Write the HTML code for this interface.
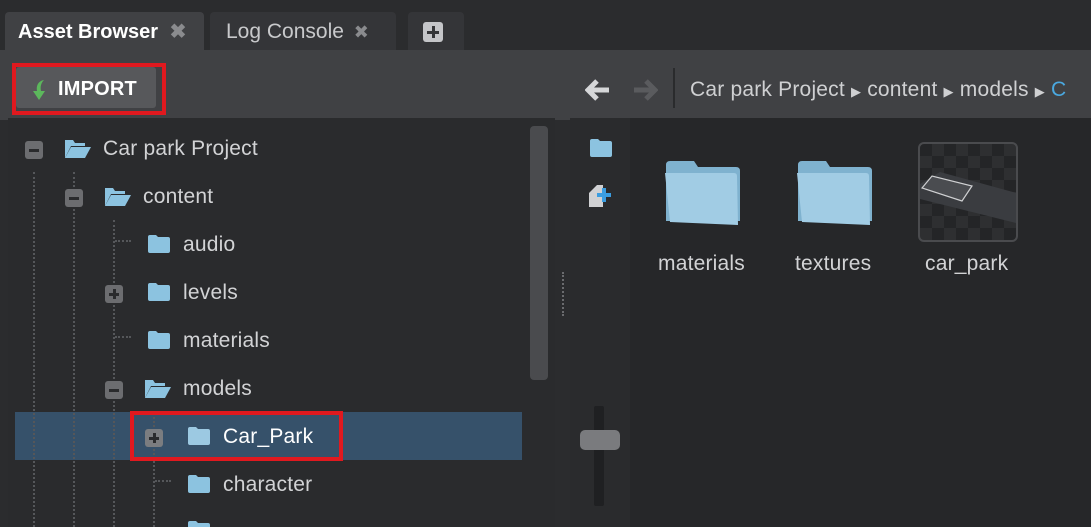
<!DOCTYPE html>
<html><head><meta charset="utf-8"><style>
*{margin:0;padding:0;box-sizing:border-box}
html,body{width:1091px;height:527px;overflow:hidden}
body{background:#2b2c2e;font-family:"Liberation Sans",sans-serif;position:relative;color:#d2d3d5}
.a{position:absolute}
.tab{position:absolute;top:12px;height:38px;border-radius:4px 4px 0 0;font-size:20px;line-height:40px;white-space:nowrap}
.t{position:absolute;font-size:21px;line-height:24px;white-space:nowrap;letter-spacing:0.2px}
.dv{position:absolute;width:0;border-left:2px dotted #55575a}
.dh{position:absolute;height:0;border-top:2px dotted #55575a}
.exp{position:absolute;width:18px;height:18px;background:#6c6d70;border-radius:3px}
.exp:before{content:"";position:absolute;left:4px;top:8px;width:10px;height:3px;background:#2a2b2d}
.exp.p:after{content:"";position:absolute;left:8px;top:4px;width:3px;height:10px;background:#2a2b2d}
</style></head><body>
<div class="tab" style="left:5px;width:199px;background:#404144;color:#fff;padding-left:13px;font-weight:bold;font-size:20px">Asset Browser <span style="color:#8a8b8e;margin-left:6px">✖</span></div>
<div class="tab" style="left:210px;width:186px;background:#343538;color:#c8c9cb;padding-left:16px;font-size:21px">Log Console <span style="color:#8a8b8e;margin-left:4px;font-size:18px">✖</span></div>
<div class="tab" style="left:408px;width:56px;background:#343538"><div class="a" style="left:15px;top:10px;width:20px;height:20px;background:#c4c5c8;border-radius:3px"><div class="a" style="left:4px;top:8.5px;width:12px;height:3px;background:#343538"></div><div class="a" style="left:8.5px;top:4px;width:3px;height:12px;background:#343538"></div></div></div>
<div class="a" style="left:0;top:50px;width:1091px;height:70px;background:#404144"></div>
<div class="a" style="left:12px;top:63px;width:154px;height:52px;border:4px solid #e0191f"></div>
<div class="a" style="left:16px;top:67px;width:140px;height:41px;background:#57585b;border-radius:3px"></div>
<svg class="a" style="left:30px;top:78px" width="22" height="24" viewBox="0 0 22 24"><path d="M14 2 C8 3 6 8 7 13 L3 13 L9 22 L15 13 L11 13 C10 9 11 5 14 2Z" fill="#5cb85c"/></svg>
<div class="t" style="left:58px;top:77px;color:#fff;font-weight:bold;font-size:20px">IMPORT</div>
<svg class="a" style="left:585px;top:79px" width="26" height="22"><path d="M12 2 L3 11 L12 20 M3 11 L24 11" stroke="#d6d7d9" stroke-width="5" fill="none"/></svg>
<svg class="a" style="left:632px;top:79px" width="26" height="22"><path d="M14 2 L23 11 L14 20 M23 11 L2 11" stroke="#5a5b5e" stroke-width="5" fill="none"/></svg>
<div class="a" style="left:673px;top:68px;width:2px;height:40px;background:#2a2b2d"></div>
<div class="t" style="left:690px;top:78px;color:#cfd0d2">Car park Project <span style="font-size:13px">▶</span> content <span style="font-size:13px">▶</span> models <span style="font-size:13px">▶</span> <span style="color:#4aa8e0">C</span></div>
<div class="a" style="left:8px;top:118px;width:547px;height:409px;background:#2a2b2d"></div>
<div class="a" style="left:530px;top:126px;width:18px;height:254px;background:#4a4b4e;border-radius:4px"></div>
<div class="a" style="left:15px;top:412px;width:507px;height:48px;background:#36516a"></div>
<div class="dv" style="left:33px;top:172px;height:355px"></div>
<div class="dv" style="left:73px;top:172px;height:355px"></div>
<div class="dv" style="left:113px;top:220px;height:307px"></div>
<div class="dv" style="left:153px;top:412px;height:115px"></div>
<div class="dh" style="left:115px;top:240px;width:16px"></div>
<div class="dh" style="left:115px;top:336px;width:16px"></div>
<div class="dh" style="left:155px;top:480px;width:16px"></div>
<div class="exp" style="left:25px;top:141px"></div>
<div class="exp" style="left:65px;top:189px"></div>
<div class="exp p" style="left:105px;top:285px"></div>
<div class="exp" style="left:105px;top:381px"></div>
<div class="exp p" style="left:145px;top:429px;background:#7b7d80"></div>
<svg class="a" style="left:64px;top:138px" width="28" height="22"><path d="M1 2 h8 l2 3 h10 v3 H7 L1 20Z" fill="#8cc3e0"/><path d="M7 9 H27 L21 20 H1Z" fill="#8cc3e0"/></svg>
<svg class="a" style="left:104px;top:186px" width="28" height="22"><path d="M1 2 h8 l2 3 h10 v3 H7 L1 20Z" fill="#8cc3e0"/><path d="M7 9 H27 L21 20 H1Z" fill="#8cc3e0"/></svg>
<svg class="a" style="left:144px;top:378px" width="28" height="22"><path d="M1 2 h8 l2 3 h10 v3 H7 L1 20Z" fill="#8cc3e0"/><path d="M7 9 H27 L21 20 H1Z" fill="#8cc3e0"/></svg>
<svg class="a" style="left:147px;top:234px" width="24" height="20"><path d="M1 3 q0-2 2-2 h6 l2 2 h10 q2 0 2 2 v12 q0 2-2 2 H3 q-2 0-2-2Z" fill="#8cc3e0"/></svg>
<svg class="a" style="left:147px;top:282px" width="24" height="20"><path d="M1 3 q0-2 2-2 h6 l2 2 h10 q2 0 2 2 v12 q0 2-2 2 H3 q-2 0-2-2Z" fill="#8cc3e0"/></svg>
<svg class="a" style="left:147px;top:330px" width="24" height="20"><path d="M1 3 q0-2 2-2 h6 l2 2 h10 q2 0 2 2 v12 q0 2-2 2 H3 q-2 0-2-2Z" fill="#8cc3e0"/></svg>
<svg class="a" style="left:187px;top:426px" width="24" height="20"><path d="M1 3 q0-2 2-2 h6 l2 2 h10 q2 0 2 2 v12 q0 2-2 2 H3 q-2 0-2-2Z" fill="#9cc9e2"/></svg>
<svg class="a" style="left:187px;top:474px" width="24" height="20"><path d="M1 3 q0-2 2-2 h6 l2 2 h10 q2 0 2 2 v12 q0 2-2 2 H3 q-2 0-2-2Z" fill="#8cc3e0"/></svg>
<svg class="a" style="left:187px;top:520px" width="24" height="7"><path d="M1 3 q0-2 2-2 h6 l2 2 h10 q2 0 2 2 v12 H1Z" fill="#8cc3e0"/></svg>
<div class="t" style="left:103px;top:137px">Car park Project</div>
<div class="t" style="left:143px;top:185px">content</div>
<div class="t" style="left:183px;top:233px">audio</div>
<div class="t" style="left:183px;top:281px">levels</div>
<div class="t" style="left:183px;top:329px">materials</div>
<div class="t" style="left:183px;top:377px">models</div>
<div class="t" style="left:223px;top:425px;color:#fff">Car_Park</div>
<div class="t" style="left:223px;top:473px">character</div>
<div class="a" style="left:130px;top:411px;width:213px;height:50px;border:4px solid #e0191f"></div>
<div class="dv" style="left:562px;top:272px;height:44px;border-left-color:#6a6b6e"></div>
<div class="a" style="left:570px;top:118px;width:60px;height:409px;background:#2a2b2d"></div>
<div class="a" style="left:630px;top:118px;width:461px;height:409px;background:#262729"></div>
<svg class="a" style="left:589px;top:138px" width="24" height="20"><path d="M1 3 q0-2 2-2 h6 l2 2 h10 q2 0 2 2 v12 q0 2-2 2 H3 q-2 0-2-2Z" fill="#8cc3e0"/></svg>
<svg class="a" style="left:587px;top:183px" width="30" height="28"><path d="M2 10 L10 2 H16 V24 H2Z" fill="#d0d1d3"/><path d="M10 12 H24 M17 5 V19" stroke="#3b9de0" stroke-width="4"/></svg>
<div class="a" style="left:594px;top:406px;width:10px;height:100px;background:#1f2022;border-radius:2px"></div>
<div class="a" style="left:580px;top:430px;width:40px;height:20px;background:#7a7b7e;border-radius:5px"></div>
<svg class="a" style="left:664px;top:159px" width="80" height="70"><path d="M2 6 q0-4 4-4 h24 l4 6 h38 q4 0 4 4 v50 H2Z" fill="#7fb2cf"/><path d="M1 14 H70 q3 0 3 3 L74 66 L6 63 Z" fill="#a1cce4"/></svg>
<svg class="a" style="left:796px;top:159px" width="80" height="70"><path d="M2 6 q0-4 4-4 h24 l4 6 h38 q4 0 4 4 v50 H2Z" fill="#7fb2cf"/><path d="M1 14 H70 q3 0 3 3 L74 66 L6 63 Z" fill="#a1cce4"/></svg>
<div class="a" style="left:918px;top:142px;width:100px;height:100px;border:2px solid #4a4b4e;border-radius:6px;background:repeating-conic-gradient(#2e2f31 0 25%,#242527 0 50%) 0 0/24px 24px;overflow:hidden">
<svg width="100" height="100"><path d="M0 40 L20 28 L100 50 L100 80 L0 55Z" fill="#3a3c40"/><path d="M2 44 L12 32 L52 42 L42 57Z" fill="#4a4c50" stroke="#cfd0d2" stroke-width="1.2"/></svg></div>
<div class="t" style="left:658px;top:252px">materials</div>
<div class="t" style="left:795px;top:252px">textures</div>
<div class="t" style="left:925px;top:252px">car_park</div>
</body></html>
